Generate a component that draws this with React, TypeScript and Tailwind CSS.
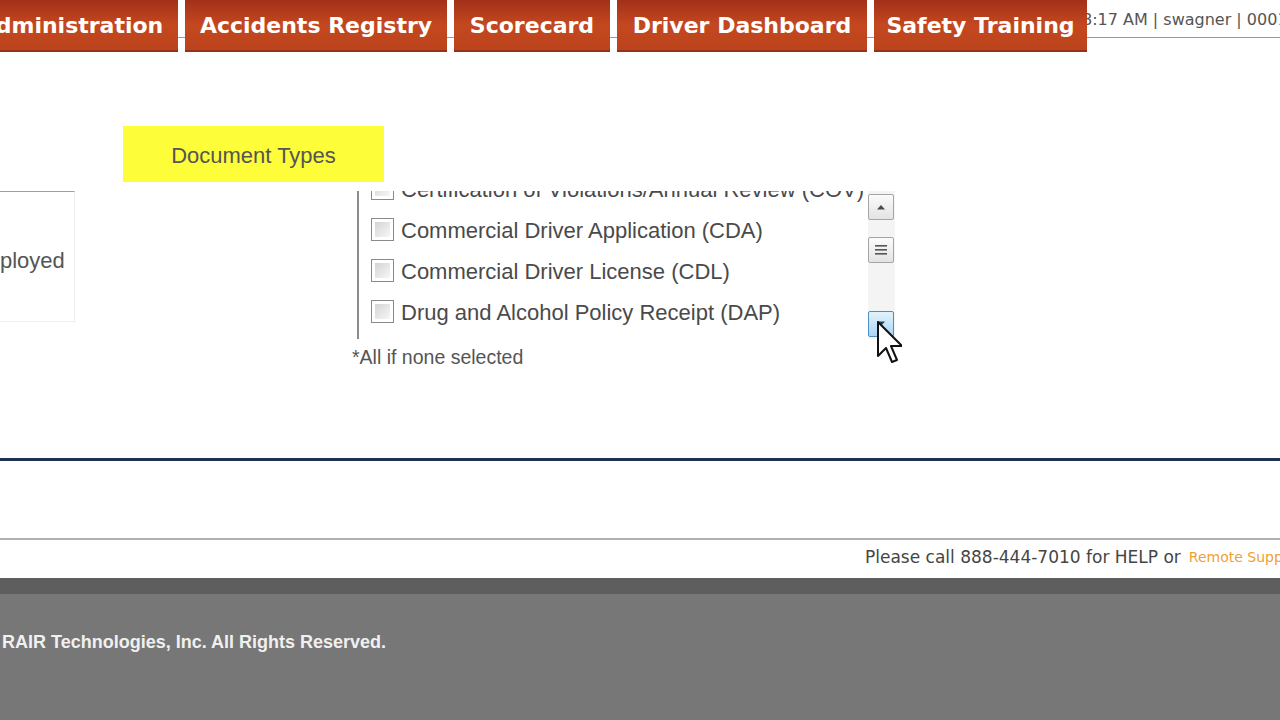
import React from 'react';

const tabs = [
  { label: 'Administration', w: 'w-[214px] -ml-[36px]' },
  { label: 'Accidents Registry', w: 'w-[262px]' },
  { label: 'Scorecard', w: 'w-[156px]' },
  { label: 'Driver Dashboard', w: 'w-[250px]' },
  { label: 'Safety Training', w: 'w-[213px]' },
];

const docs = [
  'Certification of Violations/Annual Review (COV)',
  'Commercial Driver Application (CDA)',
  'Commercial Driver License (CDL)',
  'Drug and Alcohol Policy Receipt (DAP)',
  'Employment Verification (EV)',
];

function Gap() {
  return <div className="w-[7px] shrink-0 h-[38px] border-b border-[#9a9a9a]" />;
}

function Checkbox() {
  return (
    <div className="w-[23px] h-[23px] shrink-0 border border-[#8a8a8a] bg-white p-[3px]">
      <div className="w-full h-full bg-gradient-to-br from-[#d4d4d4] to-[#f7f7f7]" />
    </div>
  );
}

function ScrollBtn({ children, active }: { children: React.ReactNode; active?: boolean }) {
  return (
    <div
      className={
        active
          ? 'w-[26px] h-[26px] rounded-[2px] border border-[#4d8ec4] bg-gradient-to-b from-[#e3f2fc] to-[#a9d6f5] flex items-center justify-center'
          : 'w-[26px] h-[26px] rounded-[2px] border border-[#a5a5a5] bg-gradient-to-b from-[#fbfbfb] to-[#e3e3e3] flex items-center justify-center'
      }
    >
      {children}
    </div>
  );
}

export default function App() {
  return (
    <div className="w-[1280px] h-[720px] overflow-hidden bg-white relative font-['Liberation_Sans',Arial,sans-serif]">
      {/* Header tabs */}
      <div className="h-[52px] flex">
        {tabs.map((t, i) => (
          <React.Fragment key={t.label}>
            {i > 0 && <Gap />}
            <div
              className={`${t.w} shrink-0 h-[52px] bg-gradient-to-b from-[#a2301a] via-[#c4481f] to-[#bb431c] border-b-2 border-[#96311a] flex items-center justify-center text-white font-bold text-[22px] font-['DejaVu_Sans',Verdana,sans-serif] whitespace-nowrap`}
            >
              {t.label}
            </div>
          </React.Fragment>
        ))}
        <div className="flex-1 h-[38px] border-b border-[#9a9a9a] overflow-hidden">
          <div className="-ml-[5px] pt-[8px] whitespace-nowrap text-[16px] text-[#555] font-['DejaVu_Sans',Verdana,sans-serif]">
            8:17 AM | swagner | 0001
          </div>
        </div>
      </div>

      {/* Form area */}
      <div className="h-[406px] pt-[74px]">
        <div className="ml-[123px] w-[261px] h-[56px] bg-[#fdfd3a] flex items-center justify-center pt-[2px] text-[22px] text-[#555]">
          Document Types
        </div>
        <div className="flex mt-[9px]">
          <div className="w-[75px] h-[131px] border-t border-[#a0a0a0] border-r border-b border-r-[#eeeeee] border-b-[#eeeeee] overflow-hidden flex items-center">
            <span className="-ml-[33px] text-[22px] text-[#555] whitespace-nowrap pt-[8px]">Employed</span>
          </div>
          <div className="ml-[277px] flex flex-col">
            <div className="ml-[5px] h-[148px] w-[538px] border-l-2 border-[#8c8c8c] flex">
              <div className="flex-1 overflow-hidden pl-[12px]">
                <div className="-mt-[23px] flex flex-col">
                  {docs.map((d) => (
                    <div key={d} className="h-[41px] flex items-center gap-[7px] whitespace-nowrap">
                      <Checkbox />
                      <span className="text-[22px] text-[#4a4a4a] pt-[1px]">{d}</span>
                    </div>
                  ))}
                </div>
              </div>
              <div className="w-[27px] bg-[#f4f4f4] flex flex-col items-start pt-[3px]">
                <ScrollBtn>
                  <svg width="10" height="6" viewBox="0 0 10 6"><path d="M1 5.5 L5 1 L9 5.5 Z" fill="#4a4a4a" /></svg>
                </ScrollBtn>
                <div className="mt-[17px]">
                  <ScrollBtn>
                    <svg width="12" height="10" viewBox="0 0 12 10">
                      <rect x="0" y="0" width="12" height="1.6" fill="#555" />
                      <rect x="0" y="4" width="12" height="1.6" fill="#555" />
                      <rect x="0" y="8" width="12" height="1.6" fill="#555" />
                    </svg>
                  </ScrollBtn>
                </div>
                <div className="mt-[48px]">
                  <ScrollBtn active>
                    <svg width="10" height="6" viewBox="0 0 10 6"><path d="M1 0.5 L9 0.5 L5 5 Z" fill="#1d4463" /></svg>
                  </ScrollBtn>
                </div>
              </div>
            </div>
            <div className="mt-[4px] text-[19.5px] text-[#555]">*All if none selected</div>
          </div>
        </div>
      </div>

      {/* cursor */}
      <svg className="absolute left-[876px] top-[320px]" width="26" height="48" viewBox="0 0 13 24">
        <path d="M1 1 L1 18 L5 14 L8 21 L10.5 20 L7.5 13 L13 13 Z" fill="#fff" stroke="#111" strokeWidth="1" strokeLinejoin="round" />
      </svg>

      <div className="h-[3px] bg-[#1e3352]" />
      <div className="h-[77px]" />
      <div className="h-[2px] bg-[#b0b0b0]" />
      <div className="h-[38px] flex items-center pb-[3px] pl-[865px] whitespace-nowrap overflow-hidden">
        <span className="text-[17px] text-[#454545] font-['DejaVu_Sans',Verdana,sans-serif]">
          Please call 888-444-7010 for HELP or
        </span>
        <span className="ml-[8px] text-[14px] text-[#f0a035] font-['DejaVu_Sans',Verdana,sans-serif]">Remote Support</span>
      </div>

      {/* Footer */}
      <div className="h-[16px] bg-[#5e5e5e]" />
      <div className="h-[126px] bg-[#777777] pt-[35px] pl-[2px]">
        <span className="text-[18px] font-bold text-[#f0f0f0]">
          RAIR Technologies, Inc. All Rights Reserved.
        </span>
      </div>
    </div>
  );
}
